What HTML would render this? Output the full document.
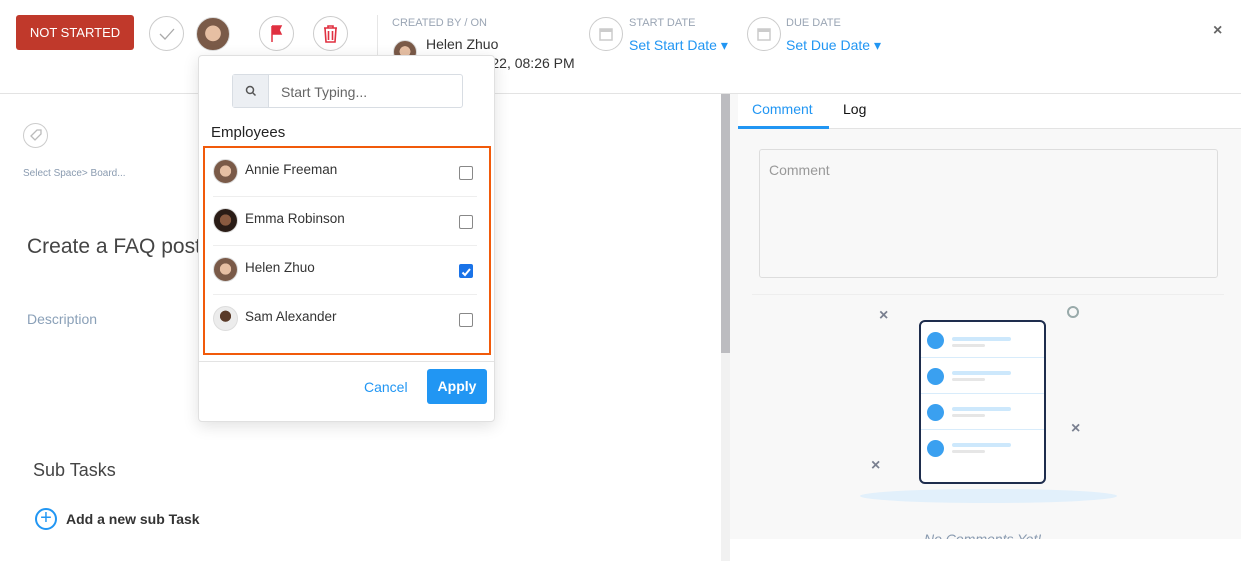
<!DOCTYPE html>
<html><head><style>
*{box-sizing:border-box;margin:0;padding:0}
body{width:1241px;height:571px;overflow:hidden;background:#fff;font-family:"Liberation Sans",sans-serif;position:relative;color:#333}
.a{position:absolute}
.circ{position:absolute;border:1px solid #ccc;border-radius:50%;background:#fff}
.av{position:absolute;border-radius:50%;background:radial-gradient(circle at 50% 48%,#e6bfa3 0 33%,#7a5a48 35% 100%);border:1px solid #ddd}
.av.d{background:radial-gradient(circle at 50% 48%,#8a5a40 0 33%,#2a1c16 35% 100%)}
.av.s{background:radial-gradient(circle at 50% 40%,#5a3a28 0 30%,#ececec 32% 100%)}
.lbl{font-size:11px;color:#9aa5b4}
.blue{color:#2196f3}
.row{position:absolute;left:213px;width:264px;height:49px;border-bottom:1px solid #eee}
.row span{position:absolute;left:32px;top:14px;font-size:13.5px;color:#333}
.row .av{left:0;top:11px;width:25px;height:25px}
.cb{position:absolute;right:4px;top:18px;width:14px;height:14px;border:1px solid #888;border-radius:2px;background:#fff}
.cb.on{background:#1a73e8;border-color:#1a73e8}
.x{position:absolute;color:#7a8090;font-size:16px;font-weight:bold}
</style></head><body>
<div class="a" style="left:16px;top:15px;width:118px;height:35px;background:#c0392b;border-radius:3px;color:#fff;font-size:13px;text-align:center;line-height:35px">NOT STARTED</div>
<div class="circ" style="left:149px;top:16px;width:35px;height:35px"><svg width="33" height="33"><path d="M10 17l5 5 9-10" stroke="#aaa" stroke-width="1.3" fill="none"/></svg></div>
<div class="av" style="left:196px;top:17px;width:34px;height:34px"></div>
<div class="circ" style="left:259px;top:16px;width:35px;height:35px"><svg width="33" height="33"><path d="M12 9v16M12 9h9l-2 4 2 4h-9" fill="#e03040" stroke="#e03040" stroke-width="1.5"/></svg></div>
<div class="circ" style="left:313px;top:16px;width:35px;height:35px"><svg width="33" height="33"><path d="M10 11h13M14 11V9h5v2M11 11l1 14h9l1-14M14.5 14v9M18.5 14v9" stroke="#e03040" stroke-width="1.6" fill="none"/></svg></div>
<div class="a" style="left:377px;top:15px;width:1px;height:55px;background:#e6e6e6"></div>
<div class="a lbl" style="left:392px;top:17px">CREATED BY / ON</div>
<div class="av" style="left:393px;top:40px;width:24px;height:24px"></div>
<div class="a" style="left:426px;top:36px;font-size:14px">Helen Zhuo</div>
<div class="a" style="left:426px;top:55px;font-size:14px">Jan 12, 2022, 08:26 PM</div>
<div class="circ" style="left:589px;top:17px;width:34px;height:34px"><svg width="32" height="32"><rect x="10" y="11" width="12" height="11" fill="none" stroke="#ccc" stroke-width="1.5"/><rect x="10" y="11" width="12" height="3" fill="#ccc"/></svg></div>
<div class="a lbl" style="left:629px;top:17px">START DATE</div>
<div class="a blue" style="left:629px;top:37px;font-size:14px">Set Start Date ▾</div>
<div class="circ" style="left:747px;top:17px;width:34px;height:34px"><svg width="32" height="32"><rect x="10" y="11" width="12" height="11" fill="none" stroke="#ccc" stroke-width="1.5"/><rect x="10" y="11" width="12" height="3" fill="#ccc"/></svg></div>
<div class="a lbl" style="left:786px;top:17px">DUE DATE</div>
<div class="a blue" style="left:786px;top:37px;font-size:14px">Set Due Date ▾</div>
<div class="a" style="left:1213px;top:22px;font-size:16px;color:#666;font-weight:bold">×</div>
<div class="a" style="left:0;top:93px;width:1241px;height:1px;background:#e3e3e3"></div>
<div class="circ" style="left:23px;top:123px;width:25px;height:25px"><svg width="23" height="23"><path d="M7 12l6-6h4v4l-6 6z" fill="none" stroke="#bbb" stroke-width="1.3"/></svg></div>
<div class="a" style="left:23px;top:168px;font-size:10px;color:#8a9bb0">Select Space&gt; Board...</div>
<div class="a" style="left:27px;top:235px;font-size:21px;color:#444;font-weight:300">Create a FAQ post</div>
<div class="a" style="left:27px;top:311px;font-size:14px;color:#8aa0b8">Description</div>
<div class="a" style="left:33px;top:460px;font-size:18px;color:#444">Sub Tasks</div>
<div class="a" style="left:35px;top:508px;width:22px;height:22px;border:2px solid #2196f3;border-radius:50%;color:#2196f3;text-align:center;line-height:17px;font-size:20px">+</div>
<div class="a" style="left:66px;top:511px;font-size:14px;font-weight:bold;color:#333">Add a new sub Task</div>
<div class="a" style="left:721px;top:94px;width:9px;height:467px;background:#f1f1f1"></div>
<div class="a" style="left:721px;top:94px;width:9px;height:259px;background:#bcbcc0"></div>
<div class="a" style="left:730px;top:94px;width:511px;height:445px;background:#f8f8f8"></div>
<div class="a" style="left:738px;top:94px;width:503px;height:35px;background:#fff;border-bottom:1px solid #e3e3e3"></div>
<div class="a blue" style="left:752px;top:101px;font-size:14px">Comment</div>
<div class="a" style="left:738px;top:126px;width:91px;height:3px;background:#2196f3"></div>
<div class="a" style="left:843px;top:101px;font-size:14px;color:#111">Log</div>
<div class="a" style="left:759px;top:149px;width:459px;height:129px;border:1px solid #ddd;border-radius:3px;background:#f8f8f8"></div>
<div class="a" style="left:769px;top:162px;font-size:14px;color:#999">Comment</div>
<div class="a" style="left:752px;top:294px;width:472px;height:1px;background:#eee"></div>
<div class="x" style="left:879px;top:307px">×</div>
<div class="x" style="left:1071px;top:420px">×</div>
<div class="x" style="left:871px;top:457px">×</div>
<div class="a" style="left:1067px;top:306px;width:12px;height:12px;border:2px solid #9aa;border-radius:50%"></div>
<div class="a" style="left:860px;top:489px;width:257px;height:14px;border-radius:50%;background:#e2f0fb"></div>
<div class="a" style="left:919px;top:320px;width:127px;height:164px;border:2px solid #1e2d4d;border-radius:6px;background:#fff">
<div style="height:36px;border-bottom:1px solid #d8ecfb;position:relative"><div style="position:absolute;left:6px;top:10px;width:17px;height:17px;border-radius:50%;background:#3aa0f0"></div><div style="position:absolute;left:31px;top:15px;width:59px;height:4px;background:#cde8fc;border-radius:2px"></div><div style="position:absolute;left:31px;top:22px;width:33px;height:3px;background:#e6e6e6;border-radius:2px"></div></div>
<div style="height:36px;border-bottom:1px solid #d8ecfb;position:relative"><div style="position:absolute;left:6px;top:10px;width:17px;height:17px;border-radius:50%;background:#3aa0f0"></div><div style="position:absolute;left:31px;top:13px;width:59px;height:4px;background:#cde8fc;border-radius:2px"></div><div style="position:absolute;left:31px;top:20px;width:33px;height:3px;background:#e6e6e6;border-radius:2px"></div></div>
<div style="height:36px;border-bottom:1px solid #d8ecfb;position:relative"><div style="position:absolute;left:6px;top:10px;width:17px;height:17px;border-radius:50%;background:#3aa0f0"></div><div style="position:absolute;left:31px;top:13px;width:59px;height:4px;background:#cde8fc;border-radius:2px"></div><div style="position:absolute;left:31px;top:20px;width:33px;height:3px;background:#e6e6e6;border-radius:2px"></div></div>
<div style="height:36px;position:relative"><div style="position:absolute;left:6px;top:10px;width:17px;height:17px;border-radius:50%;background:#3aa0f0"></div><div style="position:absolute;left:31px;top:13px;width:59px;height:4px;background:#cde8fc;border-radius:2px"></div><div style="position:absolute;left:31px;top:20px;width:33px;height:3px;background:#e6e6e6;border-radius:2px"></div></div>
</div>
<div class="a" style="left:924px;top:530px;font-size:14px;font-style:italic;color:#8a9bb0;height:9px;overflow:hidden;line-height:18px">No Comments Yet!</div>
<div class="a" style="left:198px;top:55px;width:297px;height:367px;background:#fff;border:1px solid #e0e0e0;border-radius:4px;box-shadow:0 4px 16px rgba(0,0,0,.12)"></div>
<div class="a" style="left:232px;top:74px;width:231px;height:34px;border:1px solid #d8dde3;border-radius:3px;background:#fff"></div>
<div class="a" style="left:233px;top:75px;width:36px;height:32px;background:#eceff3;border-right:1px solid #d8dde3"><svg width="36" height="32"><circle cx="17" cy="15" r="3.5" fill="none" stroke="#555" stroke-width="1.5"/><path d="M19.5 17.5l3 3" stroke="#555" stroke-width="1.5"/></svg></div>
<div class="a" style="left:281px;top:84px;font-size:14px;color:#666">Start Typing...</div>
<div class="a" style="left:211px;top:124px;font-size:15px;color:#222">Employees</div>
<div class="a" style="left:203px;top:146px;width:288px;height:209px;border:2px solid #f15a0a"></div>
<div class="row" style="top:148px"><div class="av"></div><span>Annie Freeman</span><div class="cb"></div></div>
<div class="row" style="top:197px"><div class="av d"></div><span>Emma Robinson</span><div class="cb"></div></div>
<div class="row" style="top:246px"><div class="av"></div><span>Helen Zhuo</span><div class="cb on"><svg width="12" height="12"><path d="M2.5 6.5l2.5 2.5L10 3" stroke="#fff" stroke-width="2" fill="none"/></svg></div></div>
<div class="row" style="top:295px;border:none"><div class="av s"></div><span>Sam Alexander</span><div class="cb"></div></div>
<div class="a" style="left:199px;top:361px;width:295px;height:1px;background:#e3e3e3"></div>
<div class="a blue" style="left:364px;top:379px;font-size:14px">Cancel</div>
<div class="a" style="left:427px;top:369px;width:60px;height:35px;background:#2196f3;border-radius:3px;color:#fff;font-size:14px;font-weight:bold;text-align:center;line-height:35px">Apply</div>
</body></html>
